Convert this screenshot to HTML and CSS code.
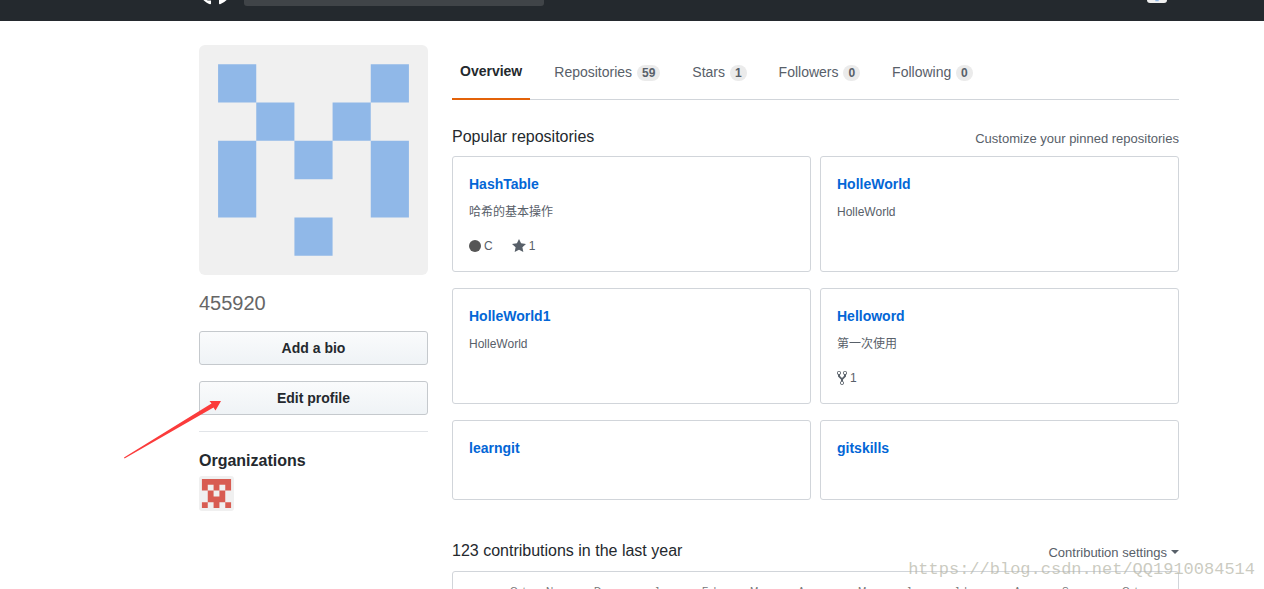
FILE: index.html
```html
<!DOCTYPE html>
<html lang="en">
<head>
    <meta charset="UTF-8">
    <meta name="viewport" content="width=device-width, initial-scale=1.0">
    <title>455920</title>
    <link rel="stylesheet" href="styles.css">
</head>
<body>
    <header class="header">
        <a class="header-logo" href="#" aria-label="Homepage">
            <svg width="32" height="32" viewBox="0 0 16 16"><path fill="#fff" d="M8 0C3.58 0 0 3.58 0 8c0 3.54 2.29 6.53 5.47 7.59.4.07.55-.17.55-.38 0-.19-.01-.82-.01-1.49-2.01.37-2.53-.49-2.69-.94-.09-.23-.48-.94-.82-1.13-.28-.15-.68-.52-.01-.53.63-.01 1.08.58 1.23.82.72 1.21 1.87.87 2.33.66.07-.52.28-.87.51-1.07-1.78-.2-3.64-.89-3.64-3.95 0-.87.31-1.59.82-2.15-.08-.2-.36-1.02.08-2.12 0 0 .67-.21 2.2.82.64-.18 1.32-.27 2-.27.68 0 1.36.09 2 .27 1.53-1.04 2.2-.82 2.2-.82.44 1.1.16 1.92.08 2.12.51.56.82 1.27.82 2.15 0 3.07-1.87 3.75-3.65 3.95.29.25.54.73.54 1.48 0 1.07-.01 1.93-.01 2.2 0 .21.15.46.55.38A8.013 8.013 0 0 0 16 8c0-4.42-3.58-8-8-8z"/></svg>
        </a>
        <input class="header-search" type="text" aria-label="Search">
        <a class="header-avatar" href="#" aria-label="Your profile">
            <svg width="20" height="20" viewBox="0 0 420 420"><path fill="#f0f0f0" d="M0 0h420v420H0z"/><path fill="#90b8e8" d="M35 35h70v70H35zM315 35h70v70h-70zM105 105h70v70h-70zM245 105h70v70h-70zM35 175h70v140H35zM175 175h70v70h-70zM315 175h70v140h-70zM175 315h70v70h-70z"/></svg>
        </a>
    </header>

    <main class="container">
        <aside class="sidebar">
            <a class="avatar" href="#" aria-label="Change your avatar">
                <svg width="100%" height="230" viewBox="0 0 420 420" preserveAspectRatio="none"><path fill="#f0f0f0" d="M0 0h420v420H0z"/><path fill="#90b8e8" d="M35 35h70v70H35zM315 35h70v70h-70zM105 105h70v70h-70zM245 105h70v70h-70zM35 175h70v140H35zM175 175h70v70h-70zM315 175h70v140h-70zM175 315h70v70h-70z"/></svg>
            </a>
            <h1 class="username">455920</h1>
            <button class="btn" type="button">Add a bio</button>
            <button class="btn" type="button">Edit profile</button>
            <section class="orgs">
                <h2>Organizations</h2>
                <a class="org-avatar" href="#" aria-label="Organization">
                    <svg width="35" height="35" viewBox="0 0 420 420"><path fill="#f0f0f0" d="M0 0h420v420H0z"/><path fill="#d85c52" d="M35 35h350v70H35zM35 105h70v70H35zM175 105h70v70h-70zM315 105h70v70h-70zM105 175h70v70h-70zM245 175h70v70h-70zM105 245h210v70H105zM35 315h70v70H35zM175 315h70v70h-70zM315 315h70v70h-70z"/></svg>
                </a>
            </section>
        </aside>

        <div class="content">
            <nav class="tabs">
                <a class="tab selected" href="#">Overview</a>
                <a class="tab" href="#">Repositories <span class="counter">59</span></a>
                <a class="tab" href="#">Stars <span class="counter">1</span></a>
                <a class="tab" href="#">Followers <span class="counter">0</span></a>
                <a class="tab" href="#">Following <span class="counter">0</span></a>
            </nav>

            <div class="section-head">
                <h2>Popular repositories</h2>
                <a class="muted-link" href="#">Customize your pinned repositories</a>
            </div>

            <div class="repos">
                <article class="repo">
                    <a class="repo-name" href="#">HashTable</a>
                    <p class="repo-desc">哈希的基本操作</p>
                    <p class="repo-meta">
                        <span class="lang"><span class="lang-color"></span>C</span>
                        <a href="#">
                            <svg width="14" height="16" viewBox="0 0 14 16"><path fill="currentColor" d="M14 6l-4.9-.64L7 1 4.9 5.36 0 6l3.6 3.26L2.67 14 7 11.67 11.33 14l-.93-4.74z"/></svg>
                            1
                        </a>
                    </p>
                </article>
                <article class="repo">
                    <a class="repo-name" href="#">HolleWorld</a>
                    <p class="repo-desc">HolleWorld</p>
                </article>
                <article class="repo">
                    <a class="repo-name" href="#">HolleWorld1</a>
                    <p class="repo-desc">HolleWorld</p>
                </article>
                <article class="repo">
                    <a class="repo-name" href="#">Helloword</a>
                    <p class="repo-desc">第一次使用</p>
                    <p class="repo-meta">
                        <a href="#">
                            <svg width="10" height="16" viewBox="0 0 10 16"><path fill="currentColor" fill-rule="evenodd" d="M8 1a1.993 1.993 0 0 0-1 3.72V6L5 8 3 6V4.72A1.993 1.993 0 0 0 2 1a1.993 1.993 0 0 0-1 3.72V6.5l3 3v1.78A1.993 1.993 0 0 0 5 15a1.993 1.993 0 0 0 1-3.72V9.5l3-3V4.72A1.993 1.993 0 0 0 8 1zM2 4.2C1.34 4.2.8 3.65.8 3c0-.65.55-1.2 1.2-1.2.65 0 1.2.55 1.2 1.2 0 .65-.55 1.2-1.2 1.2zm3 10c-.66 0-1.2-.55-1.2-1.2 0-.65.55-1.2 1.2-1.2.65 0 1.2.55 1.2 1.2 0 .65-.55 1.2-1.2 1.2zm3-10c-.66 0-1.2-.55-1.2-1.2 0-.65.55-1.2 1.2-1.2.65 0 1.2.55 1.2 1.2 0 .65-.55 1.2-1.2 1.2z"/></svg>
                            1
                        </a>
                    </p>
                </article>
                <article class="repo">
                    <a class="repo-name" href="#">learngit</a>
                </article>
                <article class="repo">
                    <a class="repo-name" href="#">gitskills</a>
                </article>
            </div>

            <div class="section-head contributions-head">
                <h2>123 contributions in the last year</h2>
                <button class="settings" type="button">Contribution settings <span class="caret"></span></button>
            </div>

            <!-- one 12px column per week, each month spans its weeks -->
            <div class="calendar">
                <span class="w3">Oct</span>
                <span class="w4">Nov</span>
                <span class="w5">Dec</span>
                <span class="w4">Jan</span>
                <span class="w4">Feb</span>
                <span class="w4">Mar</span>
                <span class="w5">Apr</span>
                <span class="w4">May</span>
                <span class="w4">Jun</span>
                <span class="w5">Jul</span>
                <span class="w4">Aug</span>
                <span class="w5">Sep</span>
                <span class="w3">Oct</span>
            </div>
        </div>
    </main>

    <svg class="arrow" width="100" height="60" viewBox="0 0 100 60"><path fill="#fb3b3b" d="M1 57.500L88.500 3.500 86.500 1 98 1 92.500 10.500 90.500 7.500 1.500 58.500z"/></svg>
    <div class="watermark">https://blog.csdn.net/QQ1910084514</div>
</body>
</html>
```

FILE: styles.css
```css
* {
    margin: 0;
    padding: 0;
    box-sizing: border-box;
}

body {
    position: relative;
    height: 100vh;
    overflow: hidden;
    font-family: "Liberation Sans", Arial, "Noto Sans CJK SC", sans-serif;
    font-size: 14px;
    line-height: 21px;
    color: #24292e;
    background: #fff;
}

a {
    color: inherit;
    text-decoration: none;
}

svg {
    display: block;
}

button {
    font-family: inherit;
    cursor: pointer;
}

/* Header, scrolled partly out of view */
.header {
    display: flex;
    align-items: flex-start;
    height: 54px;
    margin-top: -33px;
    padding: 0 97px 0 199px;
    background: #24292e;
}

.header-logo {
    margin-top: 6px;
}

.header-search {
    width: 300px;
    height: 28px;
    margin: 11px auto 0 13px;
    padding: 0 8px;
    border: 0;
    border-radius: 3px;
    color: #fff;
    background: #404448;
}

.header-avatar {
    margin-top: 16px;
    border-radius: 3px;
    overflow: hidden;
}

.container {
    display: flex;
    gap: 24px;
    padding: 24px 85px 0 199px;
}

/* Sidebar */
.sidebar {
    flex: 0 0 229px;
}

.avatar {
    display: block;
    border-radius: 6px;
    overflow: hidden;
}

.username {
    margin: 16px 0 15px;
    font-size: 20px;
    font-weight: 400;
    line-height: 25px;
    color: #666;
}

.btn {
    display: block;
    width: 100%;
    height: 34px;
    margin-bottom: 16px;
    border: 1px solid #c5c9cd;
    border-radius: 3px;
    font-size: 14px;
    font-weight: 700;
    color: #24292e;
    background: linear-gradient(#fafbfc, #eff3f6);
}

.orgs {
    padding-top: 17px;
    border-top: 1px solid #e1e4e8;
}

.orgs h2 {
    margin-bottom: 3px;
    font-size: 16px;
    line-height: 24px;
}

.org-avatar {
    display: inline-block;
    border-radius: 3px;
    overflow: hidden;
}

/* Tabs */
.content {
    flex: 1;
    min-width: 0;
}

.tabs {
    display: flex;
    gap: 16px;
    height: 55px;
    margin-bottom: 25px;
    border-bottom: 1px solid #d1d5da;
}

.tab {
    height: 55px;
    padding: 17px 8px 0;
    color: #586069;
}

.tab.selected {
    padding-top: 16px;
    border-bottom: 2px solid #e36209;
    font-weight: 700;
    color: #24292e;
}

.counter {
    display: inline-block;
    margin-left: 1px;
    padding: 2px 5px;
    border-radius: 20px;
    font-size: 12px;
    font-weight: 700;
    line-height: 12px;
    background: #ebebeb;
}

.section-head {
    display: flex;
    justify-content: space-between;
    align-items: center;
    margin-bottom: 7px;
}

.section-head h2 {
    font-size: 16px;
    font-weight: 400;
    line-height: 24px;
}

.muted-link,
.settings {
    padding-top: 2px;
    font-size: 13px;
    color: #586069;
}

/* Repositories */
.repos {
    display: grid;
    grid-template-columns: 1fr 1fr;
    gap: 16px 9px;
}

.repo {
    min-height: 80px;
    padding: 17px 16px 16px;
    border: 1px solid #d1d5da;
    border-radius: 3px;
}

.repo-name {
    display: block;
    font-weight: 700;
    color: #0366d6;
}

.repo-desc {
    margin: 8px 0 16px;
    font-size: 12px;
    line-height: 18px;
    color: #586069;
}

.repo-meta {
    display: flex;
    gap: 19px;
    font-size: 12px;
    line-height: 18px;
    color: #586069;
}

.repo-meta a,
.lang {
    display: flex;
    align-items: center;
    gap: 3px;
}

.lang-color {
    width: 12px;
    height: 12px;
    border-radius: 50%;
    background: #555;
}

/* Contributions */
.contributions-head {
    margin: 39px 0 8px;
}

.settings {
    display: flex;
    align-items: center;
    gap: 4px;
    border: 0;
    background: none;
}

.caret {
    border: 4px solid transparent;
    border-top-color: #586069;
    border-bottom: 0;
}

.calendar {
    display: grid;
    grid-template-columns: repeat(54, 12px);
    height: 160px;
    padding: 14px 0 0 57px;
    border: 1px solid #d1d5da;
    border-radius: 3px;
    font-size: 10px;
    line-height: 12px;
    color: #767676;
}

.w3 {
    grid-column: span 3;
}

.w4 {
    grid-column: span 4;
}

.w5 {
    grid-column: span 5;
}

.arrow {
    position: absolute;
    top: 400px;
    left: 123px;
}

.watermark {
    position: absolute;
    right: 9px;
    bottom: 9px;
    font-family: "Liberation Mono", monospace;
    font-size: 17px;
    color: rgba(180, 180, 165, 0.7);
}
```
